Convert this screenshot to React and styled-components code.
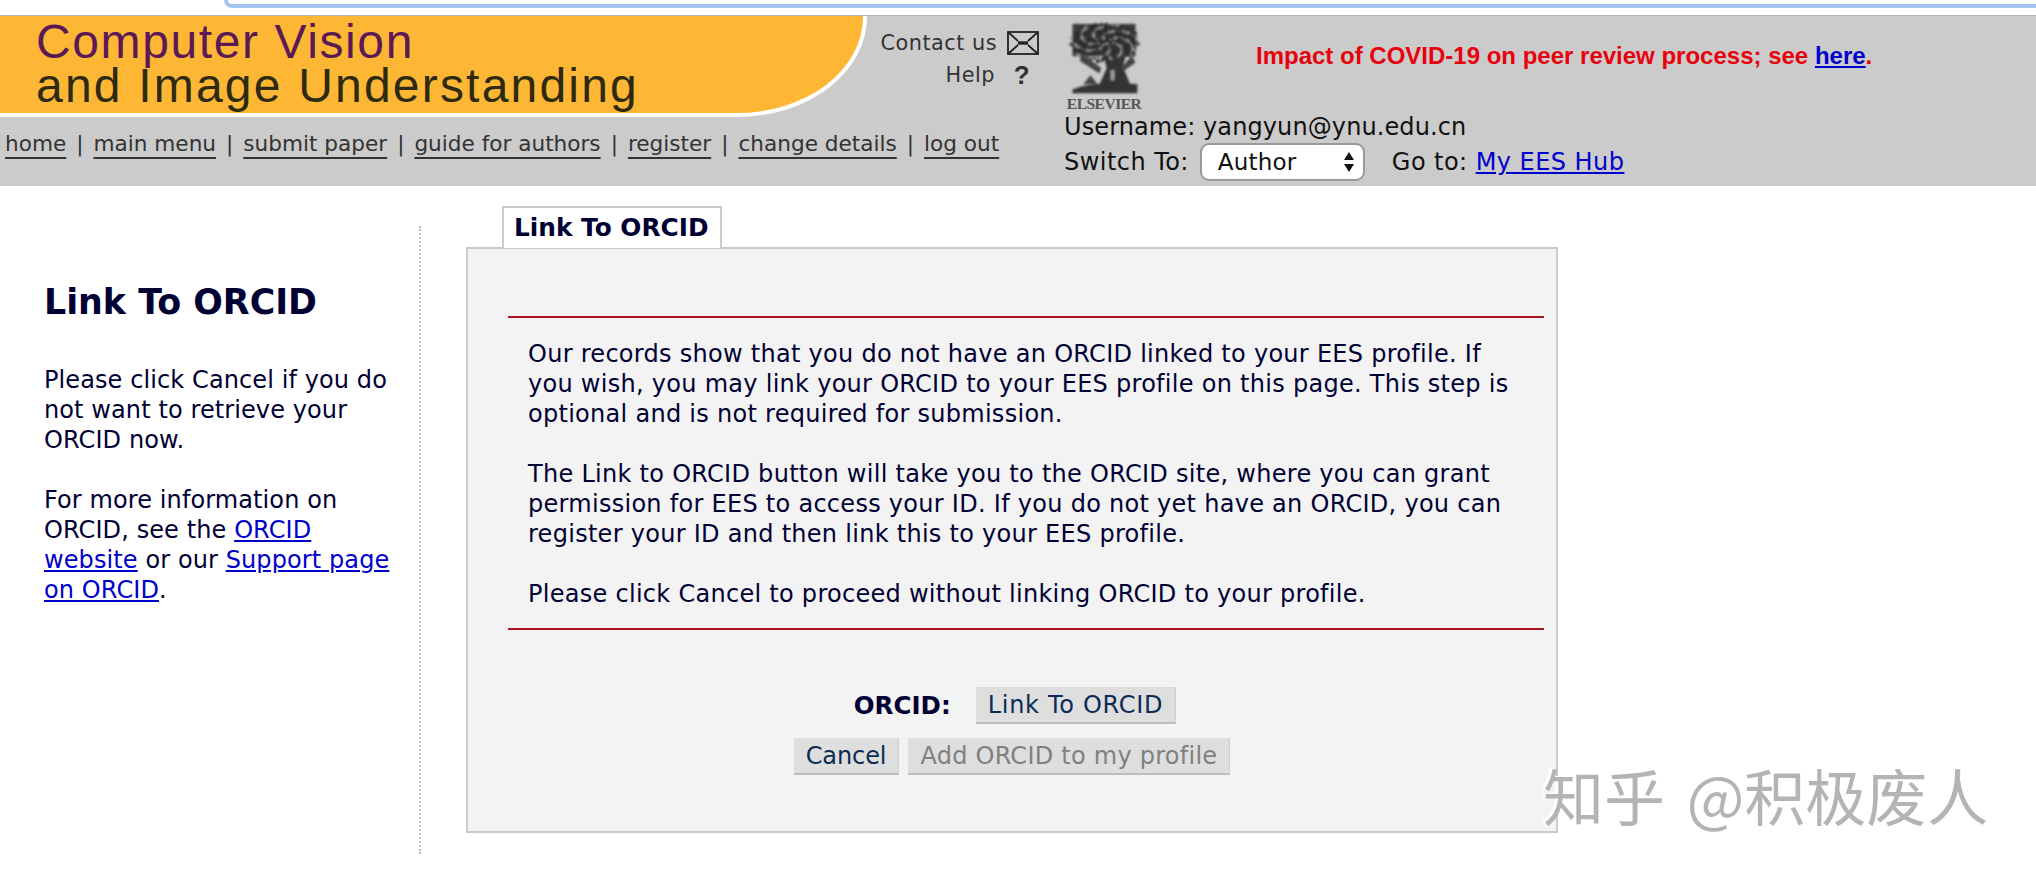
import React from "react";
import styled, { createGlobalStyle } from "styled-components";

const Global = createGlobalStyle`
  html, body { margin: 0; padding: 0; background: #fff; }
  body { font-family: "DejaVu Sans", Verdana, sans-serif; color: #000033; overflow: hidden; }
`;
const Page = styled.div`position: relative; width: 2036px; height: 880px; overflow: hidden;`;
const Chrome = styled.div`
  height: 4px; margin-left: 224px; border: 4px solid #a3c4f0; border-top: 0; border-right: 0;
  border-bottom-left-radius: 14px;
`;
const Header = styled.header`
  margin-top: 7px; height: 170px; background: #cbcbcb; border-top: 1px solid #b5b5b5;
  display: flex; position: relative;
`;
const LeftCol = styled.div`width: 872px; flex: none;`;
const Banner = styled.div`
  width: 867px; height: 101px; box-sizing: border-box; background: #fdb735;
  border-right: 4px solid #fff; border-bottom: 4px solid #fff;
  border-bottom-right-radius: 130px 100px; padding: 4px 0 0 36px;
  font-family: "Liberation Sans", Arial, sans-serif; font-size: 48px; line-height: 44px;
`;
const BannerLine = styled.div`color: ${p => p.$c}; letter-spacing: ${p => p.$ls}px; white-space: nowrap;`;
const Nav = styled.nav`
  display: flex; padding: 13px 0 0 5px; font-size: 21.6px; line-height: 28px; color: #333; white-space: nowrap;
`;
const NavLink = styled.a`
  color: #333; text-decoration: underline; text-underline-offset: 6px; text-decoration-thickness: 2px;
`;
const Sep = styled.span`margin: 0 10px;`;
const Contact = styled.div`
  width: 167px; flex: none; padding-top: 11px; font-size: 20.8px; color: #333; letter-spacing: .5px;
`;
const ContactRow = styled.div`display: flex; justify-content: flex-end; align-items: center; gap: 10px; height: 32px;`;
const HelpMark = styled.span`width: 34px; text-align: center; font-size: 26px; font-weight: bold; font-family: "Liberation Sans", sans-serif;`;
const RightCol = styled.div`flex: 1; padding-left: 25px;`;
const TopRight = styled.div`display: flex; height: 95px;`;
const LogoWrap = styled.div`
  width: 74px; margin-left: 3px; padding-top: 7px; display: flex; flex-direction: column; align-items: center;
`;
const LogoText = styled.div`
  font-family: "Liberation Serif", serif; font-size: 15.5px; line-height: 15px; color: #555; font-weight: bold; letter-spacing: -0.5px; margin-top: 1px;
`;
const Notice = styled.div`
  margin-left: 115px; padding-top: 26px; font-family: "Liberation Sans", Arial, sans-serif; font-weight: bold;
  font-size: 24px; color: #e8000b; white-space: nowrap;
`;
const BlueLink = styled.a`color: #0000cc; text-decoration: underline;`;
const UserLine = styled.div`
  font-size: 24px; line-height: 32px; color: #111; white-space: nowrap; display: flex; align-items: center;
  letter-spacing: ${p => p.$ls}px;
`;
const FakeSelect = styled.div`
  width: 165px; height: 38px; box-sizing: border-box; margin: 0 27px 0 11px; background: #fff;
  border: 2px solid #999; border-radius: 9px; display: flex; align-items: center; justify-content: space-between;
  padding: 0 8px 0 16px; font-size: 23px; letter-spacing: .2px;
`;
const Main = styled.main`display: flex; align-items: flex-start; padding-top: 20px;`;
const Side = styled.aside`
  width: 377px; height: 628px; margin: 20px 0 0 44px; box-sizing: border-box; padding-top: 56px;
  border-right: 2px dotted #bbb; font-size: 24px; letter-spacing: .1px; line-height: 30px; flex: none;
`;
const SideTitle = styled.h1`margin: 0 0 43px; font-size: 34.8px; line-height: 40px; font-weight: bold; color: #000033; letter-spacing: 0;`;
const SideP = styled.p`margin: 0 0 30px; width: 352px;`;
const Link = styled.a`color: #0000cc; text-decoration: underline;`;
const PanelArea = styled.section`margin-left: 45px; width: 1092px; flex: none;`;
const Tab = styled.div`
  margin-left: 36px; width: 220px; height: 42px; box-sizing: border-box; background: #fff; position: relative; z-index: 1;
  border: 2px solid #ccc; border-bottom: 0; padding-left: 10px; font-size: 24.8px; line-height: 39px; font-weight: bold;
`;
const Panel = styled.div`
  margin-top: -1px; height: 586px; box-sizing: border-box; background: #f3f3f3; border: 2px solid #ccc;
  padding: 67px 12px 0 40px;
`;
const Rule = styled.div`height: 2px; background: #a81520;`;
const Copy = styled.div`padding: 21px 30px 18px 20px; font-size: 24px; letter-spacing: .28px; line-height: 30px; color: #000033; height: 271px; box-sizing: content-box;`;
const CopyP = styled.p`margin: 0 0 30px;`;
const Actions = styled.div`display: flex; flex-direction: column; align-items: center; margin-top: 57px; margin-left: -28px; gap: 14px;`;
const Row = styled.div`display: flex; align-items: center; margin-left: ${p => p.$shift || 0}px;`;
const Label = styled.b`font-size: 24.5px; margin-right: 25px; color: #000033;`;
const Btn = styled.button`
  font: 24px/1 "DejaVu Sans", Verdana, sans-serif; letter-spacing: ${p => p.$ls}px; height: 37px; padding: 0 12px; border: 0; box-sizing: border-box;
  background: #dedede; border-bottom: 2px solid #bdbdbd; border-right: 1px solid #d0d0d0; color: ${p => p.disabled ? "#808080" : "#0b2c55"};
  margin-left: ${p => p.$ml || 0}px; white-space: nowrap;
`;
const Watermark = styled.div`
  position: absolute; left: 1543px; top: 760px; font-family: "Noto Sans CJK SC", sans-serif; font-size: 61px; line-height: 70px;
  color: #b4b4b4; text-shadow: -3px -1px 0 #fff; white-space: nowrap; word-spacing: 8px;
`;

const blobs = Array.from({ length: 260 }, (_, i) => {
  const a = (i * 137.5 * Math.PI) / 180;
  const r = Math.sqrt(i / 260);
  return { x: 36 + Math.cos(a) * r * 38, y: 20 + Math.sin(a) * r * 22, s: 1.5 + (i % 4) * .8 };
});
const Tree = () => (
  <svg width="74" height="80" viewBox="0 0 74 80" style={{ filter: "blur(.8px)" }}>
    <rect x="2" y="1" width="70" height="36" fill="#3c3c3c" />
    {blobs.map((b, i) => (
      <rect key={i} x={b.x} y={b.y} width={b.s} height={b.s} fill={i % 3 ? "#2a2a2a" : "#8c8c8c"} />
    ))}
    <path d="M36 34 L40 50 L32 68 H66 L58 48 L62 34 L54 42 L50 34 L46 42 Z" fill="#333" />
    <path d="M12 34 L34 50 L32 56 L10 42Z M68 36 L56 50 L58 54 L72 44Z" fill="#444" />
    <path d="M2 74 C20 66 50 66 74 68 V78 H2Z" fill="#333" />
    <path d="M14 68 L22 58 L30 68Z" fill="#444" />
    <rect x="44" y="52" width="5" height="12" fill="#999" />
  </svg>
);
const Envelope = () => (
  <svg width="32" height="24" viewBox="0 0 32 24" fill="none" stroke="#222" strokeWidth="1.8">
    <rect x="1" y="1" width="30" height="22" />
    <path d="M1 1 L11 10 M31 1 L21 10 M1 23 L11 14 M31 23 L21 14" />
    <path d="M11 12 H21" strokeWidth="3.4" />
  </svg>
);
const Spinner = () => (
  <svg width="12" height="24" viewBox="0 0 12 24" fill="#111"><path d="M6 2 L11 10 H1Z M1 14 H11 L6 22Z" /></svg>
);

const links = ["home", "main menu", "submit paper", "guide for authors", "register", "change details", "log out"];

export default function App() {
  return (
    <Page>
      <Global />
      <Chrome />
      <Header>
        <LeftCol>
          <Banner>
            <BannerLine $c="#5b1a55" $ls={1.6}>Computer Vision</BannerLine>
            <BannerLine $c="#2e2a10" $ls={2.2}>and Image Understanding</BannerLine>
          </Banner>
          <Nav>
            {links.map((l, i) => (
              <React.Fragment key={l}>
                {i > 0 && <Sep>|</Sep>}
                <NavLink>{l}</NavLink>
              </React.Fragment>
            ))}
          </Nav>
        </LeftCol>
        <Contact>
          <ContactRow>Contact us <Envelope /></ContactRow>
          <ContactRow>Help <HelpMark>?</HelpMark></ContactRow>
        </Contact>
        <RightCol>
          <TopRight>
            <LogoWrap>
              <Tree />
              <LogoText>ELSEVIER</LogoText>
            </LogoWrap>
            <Notice>Impact of COVID-19 on peer review process; see <BlueLink>here</BlueLink>.</Notice>
          </TopRight>
          <UserLine $ls={.1}>Username: yangyun@ynu.edu.cn</UserLine>
          <UserLine $ls={.45}>
            Switch To:
            <FakeSelect>Author <Spinner /></FakeSelect>
            Go to:&nbsp;<BlueLink>My EES Hub</BlueLink>
          </UserLine>
        </RightCol>
      </Header>
      <Main>
        <Side>
          <SideTitle>Link To ORCID</SideTitle>
          <SideP>Please click Cancel if you do not want to retrieve your ORCID now.</SideP>
          <SideP>For more information on ORCID, see the <Link>ORCID website</Link> or our <Link>Support page on ORCID</Link>.</SideP>
        </Side>
        <PanelArea>
          <Tab>Link To ORCID</Tab>
          <Panel>
            <Rule />
            <Copy>
              <CopyP>Our records show that you do not have an ORCID linked to your EES profile. If you wish, you may link your ORCID to your EES profile on this page. This step is optional and is not required for submission.</CopyP>
              <CopyP>The Link to ORCID button will take you to the ORCID site, where you can grant permission for EES to access your ID. If you do not yet have an ORCID, you can register your ID and then link this to your EES profile.</CopyP>
              <CopyP>Please click Cancel to proceed without linking ORCID to your profile.</CopyP>
            </Copy>
            <Rule />
            <Actions>
              <Row $shift={6}><Label>ORCID:</Label><Btn $ls={.7}>Link To ORCID</Btn></Row>
              <Row><Btn $ls={-.1}>Cancel</Btn><Btn $ml={9} $ls={.25} disabled>Add ORCID to my profile</Btn></Row>
            </Actions>
          </Panel>
        </PanelArea>
      </Main>
      <Watermark>知乎 @积极废人</Watermark>
    </Page>
  );
}
